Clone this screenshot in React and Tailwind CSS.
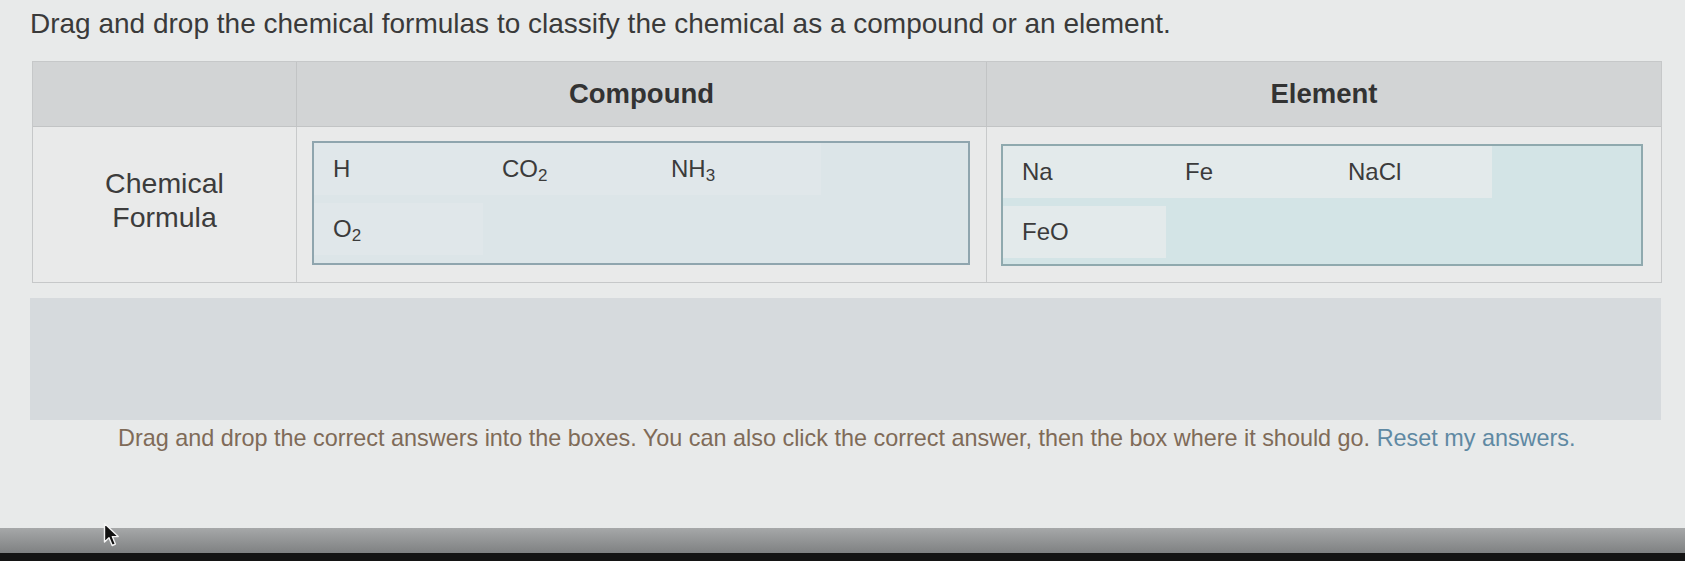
import React from "react";

const font = { fontFamily: '"Liberation Sans", Arial, Helvetica, sans-serif' };

function Tile({ children, wide, light }) {
  return (
    <div
      className={`${wide ? "w-[169px]" : "w-[163px]"} h-[52px] pl-[19px] flex items-center text-[24px] text-[#3b3b3b] ${
        light ? "bg-[#e3eaeb]" : "bg-[#e0e7ea]"
      }`}
    >
      <span>{children}</span>
    </div>
  );
}

function Sub({ children }) {
  return <sub className="text-[17px]">{children}</sub>;
}

function Cursor() {
  return (
    <svg
      className="absolute left-[103px] top-[522px]"
      width="18"
      height="26"
      viewBox="0 0 18 26"
    >
      <path
        d="M1.5 1.5 L1.5 20 L6 15.8 L9.2 23.5 L12.4 22.1 L9.3 14.6 L15.2 14.6 Z"
        fill="#111"
        stroke="#f4f4f4"
        strokeWidth="1.4"
        strokeLinejoin="round"
      />
    </svg>
  );
}

export default function App() {
  return (
    <div
      className="relative w-full h-[561px] overflow-hidden bg-[#e8eaea] flex flex-col"
      style={font}
    >
      <h1 className="pl-[30px] pt-[8px] text-[28px] leading-[32px] text-[#3a3a3a] font-normal">
        Drag and drop the chemical formulas to classify the chemical as a compound or an element.
      </h1>

      <div className="ml-[32px] mt-[21px] w-[1630px] border border-[#c6c8c9] grid grid-cols-[264px_690px_674px]">
        <div className="h-[65px] bg-[#d2d4d5] border-b border-r border-[#c2c4c5]" />
        <div className="h-[65px] bg-[#d2d4d5] border-b border-r border-[#c2c4c5] flex items-center justify-center text-[27.5px] font-bold text-[#333]">
          Compound
        </div>
        <div className="h-[65px] bg-[#d2d4d5] border-b border-[#c2c4c5] flex items-center justify-center text-[27.5px] font-bold text-[#333]">
          Element
        </div>

        <div className="h-[155px] pb-[10px] border-r border-[#c8cacb] bg-[#e9eaea] flex items-center justify-center text-center text-[28.5px] leading-[34px] text-[#3c3c3c]">
          Chemical
          <br />
          Formula
        </div>
        <div className="h-[155px] border-r border-[#c8cacb] bg-[#e9eaea] pt-[14px] pl-[15px]">
          <div className="w-[658px] h-[124px] border-2 border-[#8fa5ae] bg-[#dce5e8] flex flex-col gap-y-[8px]">
            <div className="flex">
              <Tile wide>H</Tile>
              <Tile wide>
                CO<Sub>2</Sub>
              </Tile>
              <Tile wide>
                NH<Sub>3</Sub>
              </Tile>
            </div>
            <div className="flex">
              <Tile wide>
                O<Sub>2</Sub>
              </Tile>
            </div>
          </div>
        </div>
        <div className="h-[155px] bg-[#e9eaea] pt-[17px] pl-[14px]">
          <div className="w-[642px] h-[122px] border-2 border-[#8fa9ae] bg-[#d3e4e6] flex flex-col gap-y-[8px]">
            <div className="flex">
              <Tile light>Na</Tile>
              <Tile light>Fe</Tile>
              <Tile light>NaCl</Tile>
            </div>
            <div className="flex">
              <Tile light>FeO</Tile>
            </div>
          </div>
        </div>
      </div>

      <div className="ml-[30px] mt-[15px] w-[1631px] h-[122px] bg-[#d6dadd]" />

      <p className="ml-[118px] mt-[5px] text-[23.4px] leading-[26px] text-[#7f6b58]">
        Drag and drop the correct answers into the boxes. You can also click the correct answer, then the box where it should go.{" "}
        <span className="text-[#5f89a3]">Reset my answers.</span>
      </p>

      <div className="flex-1" />
      <div className="h-[25px] bg-gradient-to-b from-[#a6a8a9] to-[#7f8182]" />
      <div className="h-[8px] bg-[#141414]" />

      <Cursor />
    </div>
  );
}
